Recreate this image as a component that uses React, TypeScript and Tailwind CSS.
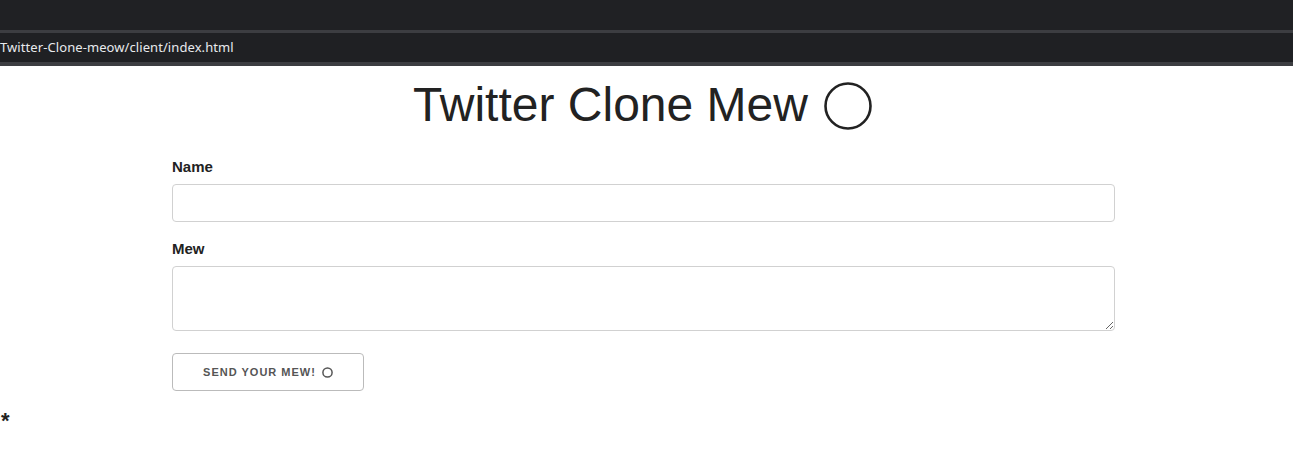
export default function App() {
  return (
    <div className="min-h-[458px] bg-white font-['Liberation_Sans',Arial,sans-serif] text-[#222]">
      {/* Browser chrome */}
      <div className="h-[30px] bg-[#202124]" />
      <div className="h-[3px] bg-[#3c3d41]" />
      <div className="flex h-[29px] items-center bg-[#1f2023] font-['Noto_Sans',sans-serif] text-[13px] leading-none tracking-[0.08px] text-[#e8eaed]">
        Twitter-Clone-meow/client/index.html
      </div>
      <div className="h-[4px] bg-[#3c3d41]" />

      <main className="pt-[9px]">
        <h1 className="flex items-center justify-center gap-[16px] pr-[8px] text-[48px] leading-[60px] font-normal tracking-[0]">
          <span>Twitter Clone Mew</span>
          <svg width="48" height="48" viewBox="0 0 48 48" className="mt-[2px]">
            <circle cx="24" cy="24" r="22.5" fill="none" stroke="#222" strokeWidth="2.6" />
          </svg>
        </h1>

        <form className="mt-[20px] flex w-[943px] flex-col" style={{ marginLeft: 172 }}>
          <label className="mb-[5px] text-[15px] leading-[24px] font-bold">Name</label>
          <input
            type="text"
            className="mb-[15px] h-[38px] w-[943px] rounded-[4px] border border-[#d1d1d1] px-[10px] py-[6px] outline-none"
          />
          <label className="mb-[5px] text-[15px] leading-[24px] font-bold">Mew</label>
          <textarea className="h-[65px] w-[943px] rounded-[4px] border border-[#d1d1d1] px-[10px] py-[6px] outline-none" />
          <div className="mt-[22px]">
            <button
              type="button"
              className="flex h-[38px] w-[192px] items-center justify-center gap-[6px] rounded-[4px] border border-[#bbb] bg-transparent pt-[1px] text-[11px] font-bold tracking-[1px] text-[#555] uppercase"
            >
              <span>Send your mew!</span>
              <svg width="11" height="11" viewBox="0 0 11 11">
                <circle cx="5.5" cy="5.5" r="4.6" fill="none" stroke="#555" strokeWidth="1.5" />
              </svg>
            </button>
          </div>
        </form>

        <div className="mt-[18px] pl-[1px] text-[22px] leading-[24px] font-bold">*</div>
      </main>
    </div>
  )
}
